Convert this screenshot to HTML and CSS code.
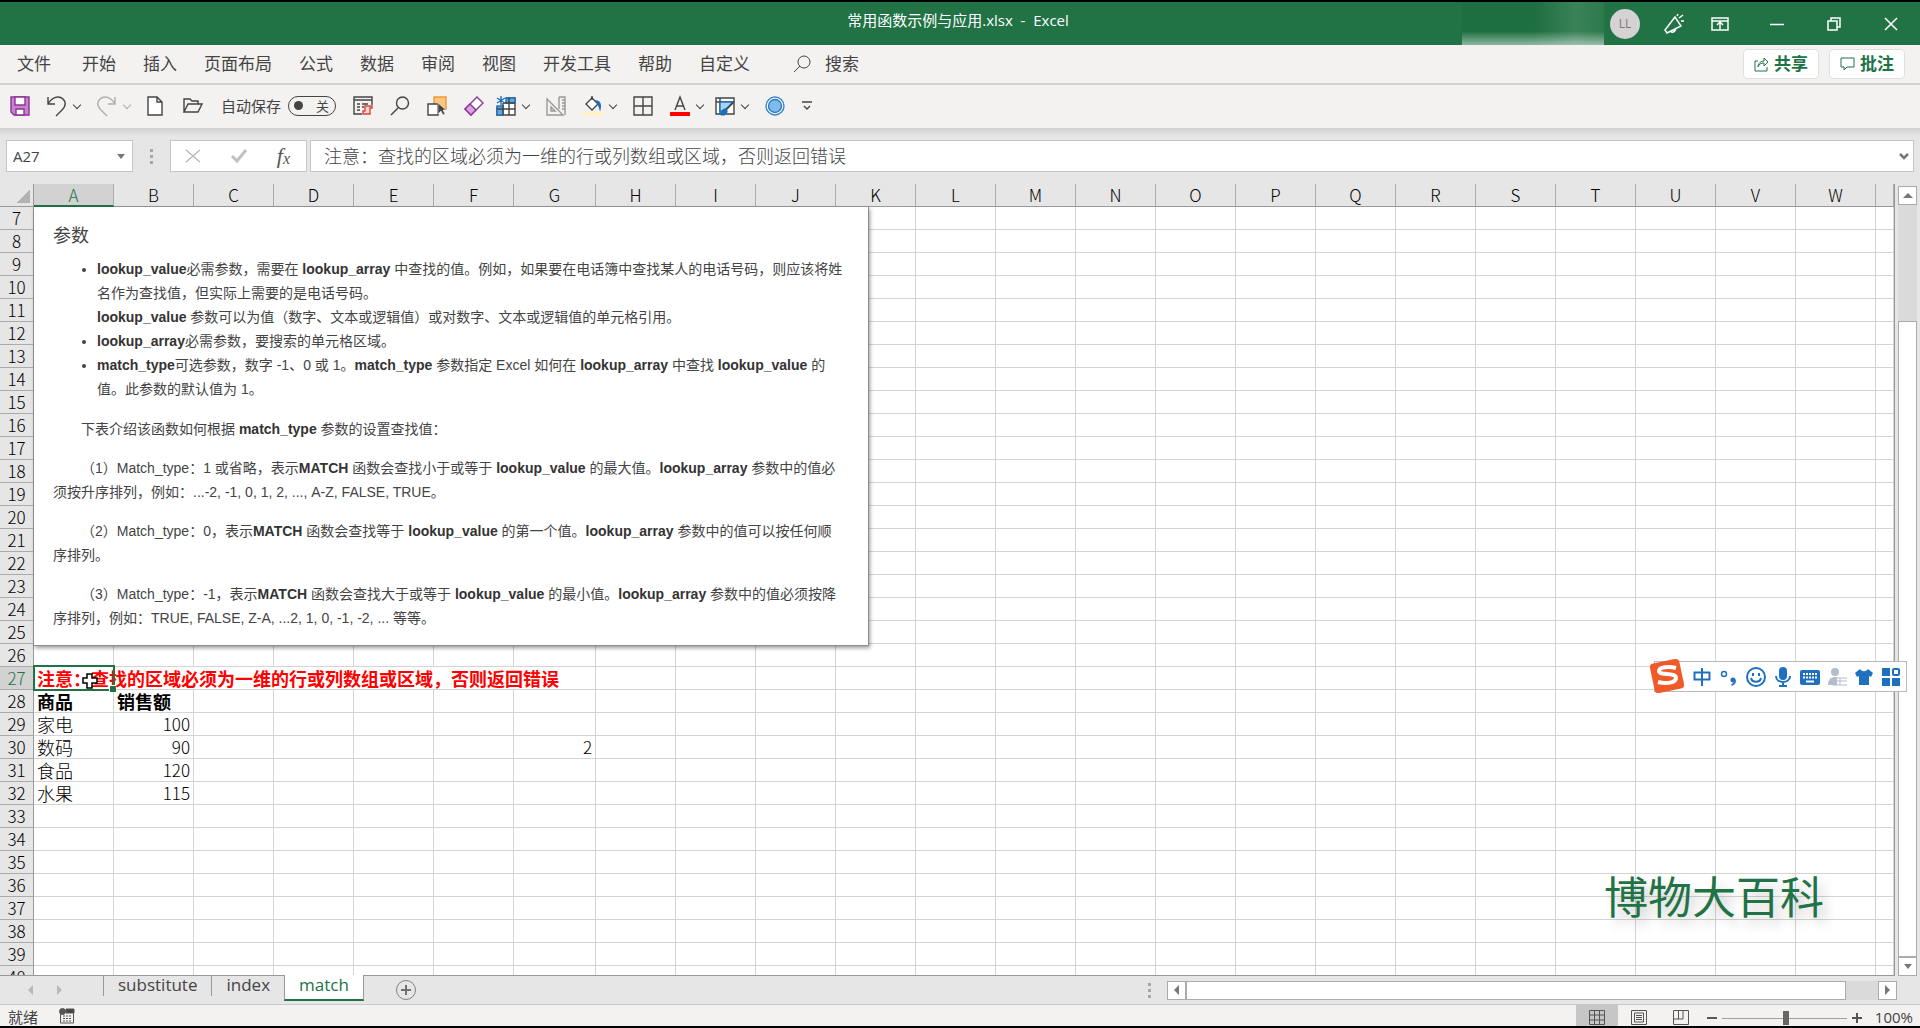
FILE: index.html
```html
<!DOCTYPE html>
<html lang="zh-CN">
<head>
<meta charset="utf-8">
<title>常用函数示例与应用.xlsx - Excel</title>
<link rel="stylesheet" href="styles.css">
</head>
<body>
<header class="titlebar">
  <h1 class="doc-title">常用函数示例与应用.xlsx&nbsp; -&nbsp; Excel</h1>
  <div class="window-tools">
    <span class="account-name"></span>
    <button class="avatar">LL</button>
    <button class="tool" aria-label="反馈"><svg width="22" height="22" viewBox="0 0 22 22"><path d="M12 4 2 17l2 3 14-7zM8 18c0 2 4 2 5-3M14 3l1-2M16 5l4-3M18 8h3"/></svg></button>
    <button class="tool" aria-label="功能区显示选项"><svg width="18" height="14" viewBox="0 0 18 14"><path d="M1 1h16v12H1zM1 4h16M9 12V6M6 8l3-3 3 3"/></svg></button>
    <button class="tool win" aria-label="最小化"><svg width="14" height="14" viewBox="0 0 14 14"><path d="M0 7.500h14"/></svg></button>
    <button class="tool win" aria-label="还原"><svg width="14" height="14" viewBox="0 0 14 14"><path d="M1 4h9v9H1zM4 4V1h9v9h-3"/></svg></button>
    <button class="tool win" aria-label="关闭"><svg width="14" height="14" viewBox="0 0 14 14"><path d="m1 1 12 12M13 1 1 13"/></svg></button>
  </div>
</header>

<nav class="menubar">
  <button class="file">文件</button><button>开始</button><button>插入</button><button>页面布局</button><button>公式</button><button>数据</button><button>审阅</button><button>视图</button><button>开发工具</button><button>帮助</button><button>自定义</button>
  <button class="search"><svg width="18" height="18" viewBox="0 0 18 18"><circle cx="11" cy="7" r="6"/><path d="m7 11-6 6"/></svg>搜索</button>
  <div class="menu-actions">
    <button class="card-btn"><svg width="16" height="16" viewBox="0 0 16 16"><path d="M4 5H1v10h12v-4M4 11c0-4 3-6 6-6V2l4 4-4 4V7c-3 0-5 1-6 4z"/></svg>共享</button>
    <button class="card-btn"><svg width="16" height="16" viewBox="0 0 16 16"><path d="M1 2h13v9H7l-3 3v-3H1z"/></svg>批注</button>
  </div>
</nav>

<div class="quickbar">
  <button aria-label="保存"><svg width="20" height="20" viewBox="0 0 20 20"><path d="M1 1h18v18H4l-3-3z" fill="#c983d0" stroke="#8a3593"/><path d="M5 1h10v8H5zM6 19v-6h8v6z" fill="#fff" stroke="#8a3593"/></svg></button>
  <button aria-label="撤消"><svg width="20" height="20" viewBox="0 0 20 20"><path d="M1 1v7h7M1 8c4-7 11-9 15-5s2 8-1 11l-6 6"/></svg><i class="chev"></i></button>
  <button aria-label="恢复" class="off"><svg width="20" height="20" viewBox="0 0 20 20"><path d="M18 1v7h-7M18 8C14 1 7-1 3 3s-2 8 1 11l6 6"/></svg><i class="chev"></i></button>
  <button aria-label="新建"><svg width="20" height="20" viewBox="0 0 20 20"><path d="M1 1h9l5 5v13H1zM10 1v5h5" fill="#fff"/></svg></button>
  <button aria-label="打开"><svg width="20" height="20" viewBox="0 0 20 20"><path d="M0 16V3h6l2 2h6v3M0 16 4 8h14l-4 8z"/></svg></button>
  <label class="autosave">自动保存<input type="checkbox" class="sr"><span class="toggle"><b></b>关</span></label>
  <button aria-label="窗体"><svg width="20" height="20" viewBox="0 0 20 20"><path d="M9 18H1V1h18v8M1 4h18"/><path d="M4 8h3M9 8h6M4 11h3M9 11h2M4 14h3"/><path d="M12 10h7v2h-2v6h-7v-3h2z" fill="#ffd9d6" stroke="#e0413a"/></svg></button>
  <button aria-label="查找"><svg width="20" height="20" viewBox="0 0 20 20"><circle cx="12.500" cy="7" r="6"/><path d="m8 12-7 7"/></svg></button>
  <button aria-label="选择对象"><svg width="20" height="20" viewBox="0 0 20 20"><path d="M7 1h12v12H7z" fill="#fbc77f" stroke="#ee963b"/><path d="M1 8h10v11H1z" fill="#fff"/><path d="M11 7v11l3-3 2 4 2-1-2-4h3z" fill="#444" stroke="#fff" stroke-width=".5"/></svg></button>
  <div class="pair">
    <button aria-label="清除"><svg width="20" height="20" viewBox="0 0 20 20"><path d="M13 1 19 7 7 19 1 13z" fill="#fff" stroke="#8a3593"/><path d="m6 8 6 6-5 5-6-6z" fill="#d9a3de" stroke="#8a3593"/></svg></button>
    <button aria-label="插入表格"><svg width="20" height="20" viewBox="0 0 20 20"><path d="M10 2h9v17H1v-8" fill="#fff"/><path d="M10 2h9v5h-9zM1 10h6v9H1z" fill="#5fa8e0" stroke="#1e6fb8"/><path d="M7 7v12M13 2v17M1 13h18M7 7h12"/><path d="M5 0v9M1 2l8 5M9 2 1 7" stroke="#1e6fb8"/></svg><i class="chev"></i></button>
  </div>
  <button aria-label="设计模式"><svg width="20" height="20" viewBox="0 0 20 20" class="dim"><path d="M1 3v16h16zM5 11v4h4zM13 1h6v18M13 1v12M16 4h3M16 7h3M16 10h3M16 13h3"/></svg></button>
  <button aria-label="填充颜色"><svg width="20" height="20" viewBox="0 0 20 20"><path d="m9 2-6 6 6 6 6-6-6-6V1" fill="#fff"/><path d="M9 4V0"/><path d="M13 5c4 0 5 4 4 8-1-3-1-5-4-8z" fill="#1e6fb8" stroke="#1e6fb8"/><path d="M0 16h20v4H0z" fill="#fff2c6" stroke="none"/></svg><i class="chev"></i></button>
  <button aria-label="边框"><svg width="20" height="20" viewBox="0 0 20 20"><path d="M1 1h18v18H1zM10 1v18M1 10h18"/></svg></button>
  <div class="pair">
    <button aria-label="字体颜色"><svg width="20" height="20" viewBox="0 0 20 20"><path d="M5 14 10 1l5 13M6.500 10h7"/><path d="M0 16h20v4H0z" fill="#f00" stroke="none"/></svg><i class="chev"></i></button>
    <button aria-label="单元格样式"><svg width="20" height="20" viewBox="0 0 20 20"><path d="M1 2h18v16H1zM1 6h18M5 2v16" fill="#fff"/><path d="M5 6h13L9 15H5z" fill="#a9d3f3" stroke="#1e6fb8"/><path d="M19 6 10 15" stroke="#444"/><path d="M10 13c-3 0-2 4-5 5 4 2 7 0 7-3z" fill="#1e6fb8" stroke="#1e6fb8"/></svg><i class="chev"></i></button>
  </div>
  <button aria-label="圆形"><svg width="20" height="20" viewBox="0 0 20 20"><circle cx="10" cy="10" r="9" fill="#fff" stroke="#3a86c8"/><circle cx="10" cy="10" r="6.500" fill="#7fbcec" stroke="#2f7cc0"/></svg></button>
  <button aria-label="自定义快速访问工具栏"><svg width="10" height="10" viewBox="0 0 10 10"><path d="M0 1h10M2 5l3 3 3-3"/></svg></button>
</div>

<div class="formulabar">
  <div class="namebox"><input type="text" value="A27" aria-label="名称框"><i class="tri down"></i></div>
  <span class="dots"></span>
  <div class="fx-tools">
    <button aria-label="取消"><svg width="16" height="14" viewBox="0 0 16 14"><path d="m1 1 14 12M15 1 1 13" stroke="#bbb" stroke-width="1.500"/></svg></button>
    <button aria-label="输入"><svg width="18" height="14" viewBox="0 0 18 14"><path d="m2 7 5 5L16 1" stroke="#c0c0c0" stroke-width="3"/></svg></button>
    <button class="fx" aria-label="插入函数">f<small>x</small></button>
  </div>
  <div class="formula"><input type="text" value="注意：查找的区域必须为一维的行或列数组或区域，否则返回错误" aria-label="编辑栏"><svg width="10" height="8" viewBox="0 0 10 8"><path d="m1 2 4 4 4-4" stroke="#777" stroke-width="2.500"/></svg></div>
</div>

<main class="workspace">
  <div class="sheet">
    <table class="grid">
      <colgroup id="cols"></colgroup>
      <thead><tr id="letters"></tr></thead>
      <tbody id="rows"></tbody>
    </table>
    <span class="selection"></span>
    <article class="help">
      <h2>参数</h2>
      <ul>
        <li><b>lookup_value</b>必需参数，需要在 <b>lookup_array</b> 中查找的值。例如，如果要在电话簿中查找某人的电话号码，则应该将姓<br>名作为查找值，但实际上需要的是电话号码。<br><b>lookup_value</b> 参数可以为值（数字、文本或逻辑值）或对数字、文本或逻辑值的单元格引用。</li>
        <li><b>lookup_array</b>必需参数，要搜索的单元格区域。</li>
        <li><b>match_type</b>可选参数，数字 -1、0 或 1。<b>match_type</b> 参数指定 Excel 如何在 <b>lookup_array</b> 中查找 <b>lookup_value</b> 的<br>值。此参数的默认值为 1。</li>
      </ul>
      <p>下表介绍该函数如何根据 <b>match_type</b> 参数的设置查找值：</p>
      <p>（1）Match_type：1 或省略，表示<b>MATCH</b> 函数会查找小于或等于 <b>lookup_value</b> 的最大值。<b>lookup_array</b> 参数中的值必<br>须按升序排列，例如：...-2, -1, 0, 1, 2, ..., A-Z, FALSE, TRUE。</p>
      <p>（2）Match_type：0，表示<b>MATCH</b> 函数会查找等于 <b>lookup_value</b> 的第一个值。<b>lookup_array</b> 参数中的值可以按任何顺<br>序排列。</p>
      <p>（3）Match_type：-1，表示<b>MATCH</b> 函数会查找大于或等于 <b>lookup_value</b> 的最小值。<b>lookup_array</b> 参数中的值必须按降<br>序排列，例如：TRUE, FALSE, Z-A, ...2, 1, 0, -1, -2, ... 等等。</p>
    </article>
    <svg class="cursor" width="16" height="16" viewBox="0 0 16 16"><path d="M5 1h5v4h5v5h-5v5H5v-5H1V5h4z" fill="#fff" stroke="#000" stroke-width="1.500"/></svg>
  </div>
  <div class="vscroll">
    <button aria-label="向上滚动"><i class="tri up"></i></button>
    <span class="vtrack"></span><span class="vthumb"></span>
    <button aria-label="向下滚动"><i class="tri down"></i></button>
  </div>
</main>

<div class="tabbar">
  <div class="tab-nav"><i class="tri left"></i><i class="tri right"></i></div>
  <button class="tab">substitute</button><button class="tab">index</button><button class="tab active">match</button>
  <button class="add" aria-label="新工作表"><svg width="20" height="20" viewBox="0 0 20 20"><circle cx="10" cy="10" r="9.500" stroke="#808080"/><path d="M5 10h10M10 5v10" stroke="#707070" stroke-width="2"/></svg></button>
  <div class="hscroll">
    <span class="dots"></span>
    <button aria-label="向左滚动"><i class="tri left"></i></button>
    <span class="hthumb"></span><span class="htrack"></span>
    <button aria-label="向右滚动"><i class="tri right"></i></button>
  </div>
</div>

<footer class="status">
  <span class="ready">就绪</span>
  <svg width="16" height="16" viewBox="0 0 16 16"><path d="M1.500 6v9h13V3M4 8h2M7 8h2M10 8h2M4 10.500h2M7 10.500h2M10 10.500h2M4 13h2M7 13h2M10 13h2"/><path d="M7 1h8v4H7z" fill="#444"/><circle cx="3.500" cy="3.500" r="3" fill="#555"/></svg>
  <div class="views">
    <button class="on" aria-label="普通"><svg width="18" height="17" viewBox="0 0 18 17"><path d="M1.500 1.500h15v14h-15zM6.500 1v15M11.500 1v15M1 6h16M1 11h16"/></svg></button>
    <button aria-label="页面布局"><svg width="18" height="17" viewBox="0 0 18 17"><path d="M1.500 1.500h15v14h-15zM4.500 4h9v9h-9zM6 6.500h6M6 8.500h6M6 10.500h6"/></svg></button>
    <button aria-label="分页预览"><svg width="18" height="17" viewBox="0 0 18 17"><path d="M1.500 1.500h15v14h-15zM1 10h10V1M6.500 1v9"/></svg></button>
  </div>
  <button class="zoom-btn" aria-label="缩小"><svg width="10" height="10" viewBox="0 0 10 10"><path d="M0 5h10" stroke-width="2"/></svg></button>
  <input type="range" class="zoom" min="0" max="100" value="51" aria-label="缩放">
  <button class="zoom-btn" aria-label="放大"><svg width="10" height="10" viewBox="0 0 10 10"><path d="M0 5h10M5 0v10" stroke-width="2"/></svg></button>
  <span class="percent">100%</span>
</footer>

<div class="ime">
  <svg class="ime-logo" width="36" height="36" viewBox="0 0 36 36"><rect x="3" y="3" width="30" height="30" rx="4" fill="#f05a28" stroke="none" transform="rotate(-12 18 18)"/><path d="M27 10c-7-2-17-1-17 3 0 5 17 1 17 7 0 5-10 6-18 4" fill="none" stroke="#fff" stroke-width="4"/></svg>
  <svg width="20" height="20" viewBox="0 0 20 20"><path d="M2.500 5.500h15v7h-15zM10 1v18"/></svg>
  <svg width="20" height="20" viewBox="0 0 20 20"><circle cx="5" cy="7" r="2.500" stroke-width="1.500"/><circle cx="14" cy="13" r="2.500" fill="#2070c0" stroke="none"/><path d="M15.500 13c1 2 0 4-3 5"/></svg>
  <svg width="20" height="20" viewBox="0 0 20 20"><circle cx="10" cy="10" r="9"/><path d="M7 6v3M13 6v3M5 11c1 5 9 5 10 0"/></svg>
  <svg width="20" height="20" viewBox="0 0 20 20"><rect x="7" y="1" width="6" height="11" rx="3" fill="#2070c0"/><path d="M3 9c0 8 14 8 14 0M10 15v4M6 19h8"/></svg>
  <svg width="20" height="20" viewBox="0 0 20 20"><rect x="0" y="3" width="20" height="15" rx="2" fill="#2070c0" stroke="none"/><path d="M3 7h14M3 10.500h14" stroke="#fff" stroke-dasharray="2 1"/><path d="M6 14.500h8" stroke="#fff"/></svg>
  <svg class="muted" width="20" height="20" viewBox="0 0 20 20"><circle cx="8" cy="5" r="4" fill="#b5bccb" stroke="none"/><path d="M1 18c0-8 5-8 9-8v8z" fill="#b5bccb" stroke="none"/><path d="M6 11h14M8 14h12M6 18h14M13 11v7" stroke-width="1"/></svg>
  <svg width="20" height="20" viewBox="0 0 20 20"><path d="M6 2c2 3 6 3 8 0l5 4-2 4-2-1v9H5V9l-2 1-2-4z" fill="#2070c0" stroke="none"/></svg>
  <svg width="20" height="20" viewBox="0 0 20 20"><path d="M1 1h8v8H1zM1 11h8v8H1zM11 11h8v8h-8z" fill="#2070c0" stroke="none"/><rect x="12" y="2" width="6" height="6" rx="1"/></svg>
</div>
<div class="watermark">博物大百科</div>
<script src="script.js"></script>
</body>
</html>
```
FILE: styles.css
```css
* { box-sizing: border-box; }
body {
  margin: 0;
  height: 100vh;
  display: flex;
  flex-direction: column;
  overflow: hidden;
  position: relative;
  border-top: 2px solid #000;
  border-bottom: 2px solid #000;
  background: #e6e6e6;
  color: #444;
  font: 15px/20px "Open Sans", "Noto Sans CJK SC", sans-serif;
  text-spacing-trim: space-all;
}
button, input { font: inherit; color: inherit; background: none; border: 0; padding: 0; margin: 0; }
button { display: flex; align-items: center; justify-content: center; white-space: nowrap; }
svg { fill: none; stroke: #444; flex: none; display: block; }
.sr { position: absolute; opacity: 0; }

/* title bar */
.titlebar {
  height: 43px;
  flex: none;
  display: grid;
  grid-template-columns: 1fr auto 1fr;
  align-items: center;
  background: #217346;
  color: #fff;
}
.doc-title { grid-column: 2; margin: 0; padding: 0 4px 8px 0; font-size: 15px; font-weight: 400; }
.window-tools { height: 100%; display: flex; align-items: center; justify-content: flex-end; padding-right: 22px; }
.window-tools svg { stroke: #fff; stroke-width: 1.5; }
.account-name {
  align-self: stretch;
  width: 142px;
  margin-right: 6px;
  background: linear-gradient(#0000 68%, #ffffff80), linear-gradient(90deg, #1d6e40 50%, #3b8259 80%, #2d794d);
}
.avatar { width: 30px; height: 30px; border-radius: 50%; background: #d4d2d2; color: #857575; font-size: 12px; }
.tool { width: 22px; margin-left: 23px; }
.win { width: 14px; margin-left: 43px; }
.tool:nth-child(4) { margin-left: 24px; }
.tool:nth-child(5) { margin-left: 39px; }

/* menu bar */
.menubar {
  height: 38px;
  flex: none;
  display: flex;
  align-items: center;
  gap: 27px;
  padding: 0 15px 0 17px;
  background: #f3f2f1;
  font-size: 17px;
}
.file { margin-right: 4px; }
.search { gap: 14px; margin-left: 16px; }
.menu-actions { display: flex; gap: 10px; margin-left: auto; }
.card-btn {
  width: 76px;
  height: 30px;
  gap: 4px;
  background: #fff;
  border: 1px solid #e1dfdd;
  border-radius: 4px;
  color: #217346;
  font-weight: 700;
}
.card-btn svg { stroke: #217346; }

/* quick access toolbar */
.quickbar {
  height: 45px;
  flex: none;
  display: flex;
  align-items: center;
  gap: 17px;
  padding: 0 0 2px 10px;
  border-top: 2px solid #d2d0ce;
  background: #f3f2f1;
}
.quickbar button { gap: 6px; }
.quickbar svg { stroke-width: 1.4; overflow: visible; }
.pair { display: flex; gap: 12px; }
.chev { width: 7px; height: 6px; position: relative; }
.chev::before {
  content: "";
  display: block;
  width: 5px;
  height: 5px;
  margin: -1px 0 0 1px;
  border: solid #444;
  border-width: 0 1px 1px 0;
  transform: rotate(45deg);
}
.off svg { stroke: #b0aeac; }
.off .chev { opacity: .4; }
.quickbar .dim { stroke: #999; }
.autosave { display: flex; align-items: center; gap: 7px; white-space: nowrap; }
.toggle {
  width: 48px;
  height: 20px;
  display: flex;
  align-items: center;
  justify-content: space-between;
  padding: 0 6px 0 5px;
  border: 1px solid #444;
  border-radius: 10px;
  font-size: 13px;
}
.toggle b { width: 9px; height: 9px; border-radius: 50%; background: #444; }

/* formula bar */
.formulabar {
  height: 56px;
  flex: none;
  display: flex;
  align-items: center;
  padding: 0 6px;
  background: linear-gradient(#d0d0d0, #e6e6e6 8px);
}
.namebox, .fx-tools, .formula { height: 32px; display: flex; align-items: center; background: #fff; border: 1px solid #c6c6c6; }
.namebox { width: 127px; padding: 0 7px 0 6px; font-size: 15px; }
.namebox input { width: 100%; }
.dots { width: 3px; height: 15px; background: repeating-linear-gradient(#a6a6a6 0 3px, #0000 3px 6px); }
.formulabar .dots { margin: 0 17px; }
.fx-tools { width: 137px; padding: 0 16px 0 14px; justify-content: space-between; }
.fx { font: italic 22px/24px "Liberation Serif", serif; color: #555; }
.fx small { font-size: 16px; padding-top: 6px; }
.formula { flex: 1; margin-left: 3px; padding: 0 4px 0 13px; font-size: 18px; }
.formula input { flex: 1; font-weight: 300; font-family: "Noto Sans CJK SC", sans-serif; padding-bottom: 2px; }

.tri { width: 0; height: 0; flex: none; border: 0 solid #0000; }
.down { border-width: 5px 4px 0; border-top-color: #777; }
.up { border-width: 0 5px 5px; border-bottom-color: #777; }
.left { border-width: 5px 5px 5px 0; border-right-color: #777; }
.right { border-width: 5px 0 5px 5px; border-left-color: #777; }

/* worksheet */
.workspace { flex: 1; min-height: 0; display: grid; grid-template-columns: 1fr 25px; }
.sheet { position: relative; overflow: hidden; background: #fff; border-right: 1px solid #999; border-bottom: 1px solid #999; }
.grid { width: 100%; table-layout: fixed; border-spacing: 0; color: #000; font: 17px/22px "Noto Sans CJK SC", sans-serif; }
.grid th, .grid td { height: 23px; padding: 0; white-space: nowrap; border: solid #d4d4d4; border-width: 0 1px 1px 0; }
.grid th { background: #e6e6e6; border-color: #ababab; font-weight: 300; }
.grid thead th { border-bottom-color: #999; }
.grid tbody th { border-right-color: #999; }
.grid td { text-align: left; padding-left: 3px; font-size: 18px; font-weight: 300; }
.grid td.num { text-align: right; padding-right: 3px; font-size: 17px; }
.grid td.strong { font-weight: 700; }
.grid td.warn { color: #f00; font-weight: 700; }
.grid th.picked { background: #d2d2d2; color: #217346; }
.grid thead th.picked { border-bottom: 2px solid #217346; line-height: 21px; }
.grid .corner { background: linear-gradient(135deg, #e6e6e6 50%, #b3b3b3 50%) 16px 5px / 14px 14px no-repeat #e6e6e6; border-right-color: #999; }
.col-num { width: 34px; }
.col { width: 80px; }
.col-wide { width: 82px; }

.selection { position: absolute; left: 33px; top: 481px; width: 82px; height: 26px; border: 2px solid #217346; }
.selection::after { content: ""; position: absolute; right: -3px; bottom: -3px; width: 6px; height: 6px; background: #217346; border: solid #fff; border-width: 1px 0 0 1px; }
.cursor { position: absolute; left: 82px; top: 489px; }

.help {
  position: absolute;
  left: 34px;
  top: 23px;
  width: 835px;
  padding: 17px 18px 15px 19px;
  background: #fff;
  border: solid #8c8c8c;
  border-width: 0 1px 1px 0;
  box-shadow: 1px 2px 4px #0006;
  color: #444;
  font: 14px/24px "Liberation Sans", "Noto Sans CJK SC", sans-serif;
  white-space: nowrap;
}
.help h2 { margin: 0 0 9px; font-size: 18px; line-height: 24px; font-weight: 400; }
.help ul { margin: 0 0 16px; padding-left: 44px; }
.help p { margin: 15px 0 0; text-indent: 28px; }
.help b { color: #333; }

.vscroll { display: flex; flex-direction: column; padding: 2px 3px 0 3px; }
.vscroll button, .hscroll button { width: 19px; height: 19px; flex: none; background: #fff; border: 1px solid #ababab; }
.vtrack { flex: 116; background: #dadada; }
.vthumb { flex: 636; background: #fff; border: 1px solid #ababab; }

/* sheet tabs */
.tabbar { height: 28px; flex: none; display: flex; align-items: center; padding-right: 23px; }
.tab-nav { width: 103px; display: flex; gap: 24px; padding-left: 28px; opacity: .4; }
.tab { align-self: flex-start; height: 20px; padding: 0 14px 2px 14px; border-left: 1px solid #999; font-size: 17px; }
.tab.active { height: 26px; margin-top: -1px; padding-bottom: 4px; background: #fff; color: #217346; border-right: 1px solid #999; border-bottom: 2px solid #217346; position: relative; }
.add { margin-left: 32px; }
.hscroll { width: 749px; margin-left: auto; display: flex; align-items: center; }
.hscroll .dots { margin-right: 16px; }
.hthumb { flex: 660; height: 19px; background: #fff; border: 1px solid #ababab; }
.htrack { flex: 32; height: 19px; background: #dadada; }

/* status bar */
.status { height: 22px; flex: none; display: flex; align-items: center; padding: 0 7px 0 8px; background: #f3f2f1; border-top: 1px solid #c8c8c8; }
.status > svg { margin-left: 21px; }
.status svg { stroke: #555; }
.ready { padding-top: 2px; }
.views { align-self: stretch; margin-left: auto; display: flex; }
.views button { width: 42px; height: 100%; padding-top: 3px; }
.views .on { background: #c6c6c6; }
.zoom-btn { margin-left: 5px; padding-top: 4px; }
.zoom { appearance: none; width: 125px; height: 18px; margin-left: 5px; background: linear-gradient(#a0a0a0, #a0a0a0) 0 11px / 100% 1px no-repeat; }
.zoom::-webkit-slider-thumb { appearance: none; width: 6px; height: 14px; margin-top: 4px; background: #666; }
.percent { width: 51px; text-align: right; padding-top: 2px; font-size: 15px; }

/* floating input-method bar and watermark */
.ime {
  position: absolute;
  right: 13px;
  top: 659px;
  height: 31px;
  display: flex;
  align-items: center;
  gap: 7px;
  padding-right: 5px;
  background: #fff;
  border: 1px solid #b8b8b8;
}
.ime svg { stroke: #2070c0; stroke-width: 2; }
.ime .ime-logo { margin: -2px 0 0 -6px; }
.ime .muted { stroke: #b5bccb; }
.watermark {
  position: absolute;
  right: 96px;
  bottom: 99px;
  color: #217346;
  font: 44px/64px "Noto Sans CJK SC", sans-serif;
  text-shadow: 6px 8px 12px #0003;
}
```
FILE: script.js
```js
const letters = 'ABCDEFGHIJKLMNOPQRSTUVW'.split('').concat('');
const cells = {
  A27: ['注意：查找的区域必须为一维的行或列数组或区域，否则返回错误', 'warn', 7],
  A28: ['商品', 'strong'], B28: ['销售额', 'strong'],
  A29: ['家电'], B29: ['100', 'num'],
  A30: ['数码'], B30: ['90', 'num'], G30: ['2', 'num'],
  A31: ['食品'], B31: ['120', 'num'],
  A32: ['水果'], B32: ['115', 'num'],
};
const add = (parent, tag, cls, text) => {
  const el = document.createElement(tag);
  if (cls) el.className = cls;
  if (text) el.textContent = text;
  parent.append(el);
  return el;
};
const cols = document.getElementById('cols');
const head = document.getElementById('letters');
add(cols, 'col', 'col-num');
add(head, 'th', 'corner');
letters.forEach((l) => {
  add(cols, 'col', l === 'G' ? 'col-wide' : l ? 'col' : '');
  add(head, 'th', l === 'A' ? 'picked' : '', l);
});
for (let r = 7; r <= 40; r++) {
  const row = add(document.getElementById('rows'), 'tr');
  add(row, 'th', r === 27 ? 'picked' : '', String(r));
  for (let c = 0; c < letters.length; c++) {
    const [text, cls, span] = cells[letters[c] + r] || [];
    const td = add(row, 'td', cls, text);
    if (span) { td.colSpan = span; c += span - 1; }
  }
}
```
